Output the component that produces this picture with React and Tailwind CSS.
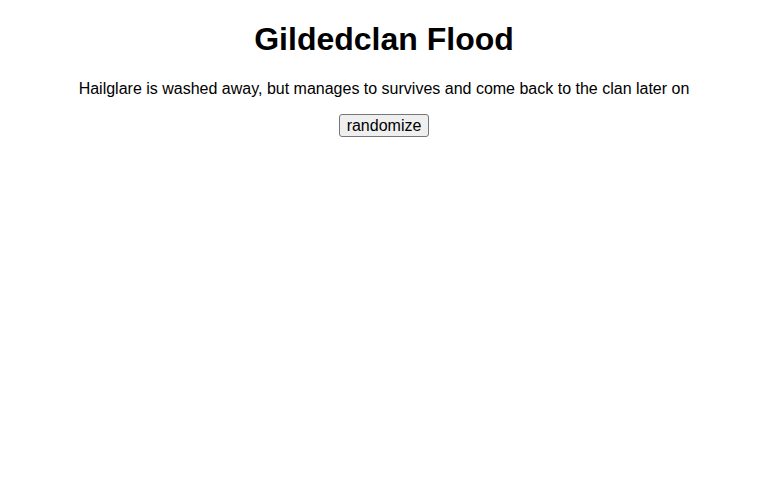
import { useState } from 'react'

const names = ['Hailglare', 'Mosspelt', 'Emberfang', 'Reedwhisker']
const fates = [
  'is washed away, but manages to survives and come back to the clan later on',
  'is swept downstream and is never seen again',
  'helps carry the kits to higher ground',
]

export default function App() {
  const [event, setEvent] = useState(`${names[0]} ${fates[0]}`)

  const randomize = () => {
    const n = names[Math.floor(Math.random() * names.length)]
    const f = fates[Math.floor(Math.random() * fates.length)]
    setEvent(`${n} ${f}`)
  }

  return (
    <div className="min-h-screen bg-white text-black text-center font-['Liberation_Sans',Arial,sans-serif]">
      <h1 className="pt-[21.44px] mb-[21.44px] text-[32px] font-bold leading-[normal]">Gildedclan Flood</h1>
      <p className="text-base leading-[normal] mb-4">{event}</p>
      <button
        type="button"
        onClick={randomize}
        className="px-[7px] py-px text-base leading-[19px] bg-[#efefef] border border-[#767676] rounded-[3px] hover:bg-[#e5e5e5] cursor-default"
      >
        randomize
      </button>
    </div>
  )
}
